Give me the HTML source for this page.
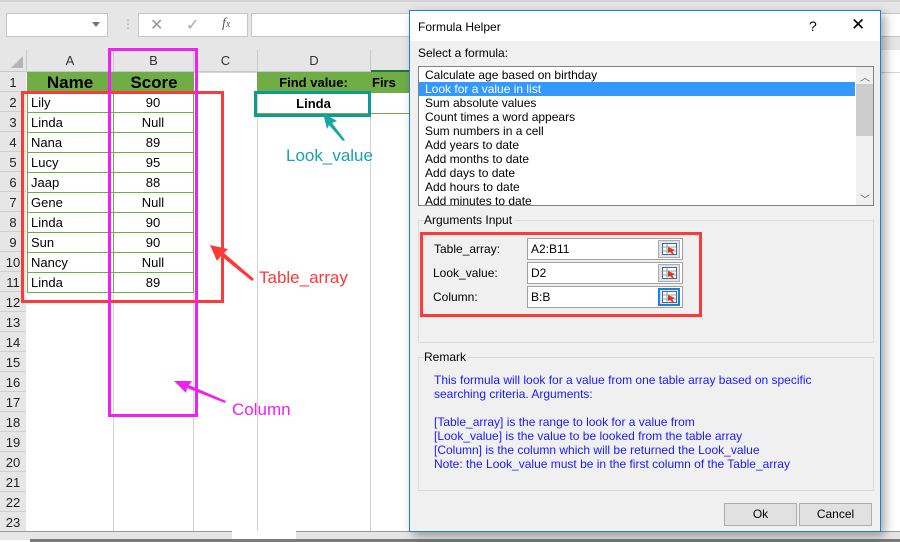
<!DOCTYPE html>
<html><head><meta charset="utf-8"><style>
*{margin:0;padding:0;box-sizing:border-box}
body{width:900px;height:542px;overflow:hidden;position:relative;background:#fff;font-family:"Liberation Sans",Arial,sans-serif;font-size:13px;color:#000}
.a{position:absolute}
.top{left:0;top:0;width:900px;height:50px;background:#e6e6e6;border-top:2px solid #d4d4d4}
.box{background:#fff;border:1px solid #c6c6c6}
.grid{left:26px;top:72px;width:874px;height:460px;background:
repeating-linear-gradient(to bottom,transparent 0,transparent 20px,#d4d4d4 20px,#d4d4d4 21px);background-size:100% 20px}
.vl{width:1px;background:#d4d4d4;top:50px;height:481px}
.rh{left:0;width:26px;text-align:center;font-size:13px;color:#222;background:#e6e6e6;height:20px;line-height:21px;border-bottom:1px solid #cfcfcf}
.ch{top:50px;height:22px;line-height:22px;text-align:center;background:#e6e6e6;border-right:1px solid #c8c8c8;border-bottom:1px solid #c8c8c8;color:#333}
.cell{height:20px;line-height:22px;font-size:13px}
.g{background:#70ad47;font-weight:bold;font-size:17px;text-align:center}
.dlg{left:409px;top:10px;width:472px;height:522px;background:#f0f0f0;border:1px solid #1e7fd6;box-shadow:4px 4px 10px rgba(0,0,0,.35)}
.li{left:6px;height:14px;line-height:14px;font-size:12px}
.lbl{font-size:12px}
.inp{background:#fff;border:1px solid #a0a0a0;height:22px;font-size:12px;line-height:20px;padding-left:3px}
.btn{position:absolute;right:2px;top:1px;width:22px;height:18px;background:#e1e1e1;border:1px solid #adadad}
.btn svg{position:absolute;left:3px;top:2px}
.rm{color:#1a1aff;font-size:12px;line-height:14px}
.bt{background:#e1e1e1;border:1px solid #adadad;height:23px;text-align:center;line-height:21px;font-size:12px}
</style></head><body>
<div class="a top"></div>
<div class="a box" style="left:6px;top:13px;width:102px;height:24px"></div>
<div class="a" style="left:92px;top:22px;border-left:4px solid transparent;border-right:4px solid transparent;border-top:5px solid #777"></div>
<div class="a" style="left:122px;top:17px;color:#aaa;font-size:12px">⋮</div>
<div class="a box" style="left:138px;top:13px;width:110px;height:24px"></div>
<div class="a" style="left:150px;top:15px;color:#999;font-size:16px">✕</div>
<div class="a" style="left:186px;top:15px;color:#aaa;font-size:16px">✓</div>
<div class="a" style="left:222px;top:16px;color:#555;font-style:italic;font-family:'Liberation Serif',serif;font-size:14px">f<span style="font-size:10px">x</span></div>
<div class="a box" style="left:251px;top:13px;width:660px;height:24px"></div>

<div class="a grid"></div>
<div class="a" style="left:26px;top:72px;width:874px;height:1px;background:#d4d4d4"></div>
<div class="a vl" style="left:113px"></div>
<div class="a vl" style="left:193px"></div>
<div class="a vl" style="left:257px"></div>
<div class="a vl" style="left:370px"></div>
<div class="a ch" style="left:0;width:27px"></div>
<div class="a" style="left:11px;top:56px;border-left:12px solid transparent;border-bottom:12px solid #b5b5b5"></div>
<div class="a ch" style="left:27px;width:87px">A</div>
<div class="a ch" style="left:114px;width:80px">B</div>
<div class="a ch" style="left:194px;width:64px">C</div>
<div class="a ch" style="left:258px;width:113px">D</div>
<div class="a ch" style="left:371px;width:60px;border-bottom:2px solid #217346"></div>
<div id="rows"></div>
<script>
var h='';for(var i=1;i<=23;i++){h+='<div class="a rh" style="top:'+(72+(i-1)*20)+'px">'+i+'</div>';}
var n=['Lily','Linda','Nana','Lucy','Jaap','Gene','Linda','Sun','Nancy','Linda'],s=['90','Null','89','95','88','Null','90','90','Null','89'];
for(var j=0;j<10;j++){var t=92+j*20;h+='<div class="a cell" style="left:27px;top:'+t+'px;width:87px;height:21px;padding-left:3px;border:1px solid #70ad47;border-top:none">'+n[j]+'</div><div class="a cell" style="left:113px;top:'+t+'px;width:81px;height:21px;text-align:center;border:1px solid #70ad47;border-top:none;border-left:none">'+s[j]+'</div>';}
document.getElementById('rows').innerHTML=h;
</script>
<div class="a cell g" style="left:27px;top:72px;width:167px;height:21px"><span style="position:absolute;left:0;width:86px;text-align:center;top:0">Name</span><span style="position:absolute;left:87px;width:80px;text-align:center;top:0">Score</span></div>
<div class="a cell g" style="left:257px;top:72px;width:152px;height:21px;font-size:13px;line-height:22px"><span style="position:absolute;left:0;width:113px">Find value:</span><span style="position:absolute;left:115px">Firs</span></div>
<div class="a" style="left:257px;top:93px;width:152px;height:21px;border-bottom:1px solid #70ad47"></div>
<div class="a cell" style="left:257px;top:93px;width:113px;text-align:center;font-weight:bold">Linda</div>
<div class="a" style="left:254px;top:91px;width:117px;height:26px;border:3px solid #0f9a96"></div>
<div class="a" style="left:286px;top:146px;color:#16a5a5;font-size:17px">Look_value</div>
<svg class="a" style="left:315px;top:110px" width="40" height="40"><polygon points="8,3 22,11 17,13 30,30 28,31 14,15 12,19" fill="#16a5a5"/></svg>
<div class="a" style="left:21px;top:91px;width:203px;height:212px;border:3px solid #fb3a3a"></div>
<div class="a" style="left:108px;top:48px;width:90px;height:369px;border:3px solid #f020f0"></div>
<svg class="a" style="left:200px;top:235px" width="60" height="50"><polygon points="10,10 28,14 24,18 54,44 52,46 21,21 17,26" fill="#fb3a3a"/></svg>
<div class="a" style="left:259px;top:268px;color:#fb3a3a;font-size:17px">Table_array</div>
<svg class="a" style="left:170px;top:375px" width="60" height="40"><polygon points="4,6 22,6 19,10 56,26 55,28 17,13 16,18" fill="#f020f0"/></svg>
<div class="a" style="left:232px;top:400px;color:#f020f0;font-size:17px">Column</div>
<div class="a" style="left:0;top:531px;width:900px;height:9px;background:#e6e6e6;border-top:1px solid #999"></div>
<div class="a" style="left:232px;top:531px;width:64px;height:9px;background:#fff"></div>
<div class="a" style="left:30px;top:539px;width:870px;height:3px;background:#7a7a7a"></div>

<div class="a dlg">
<div class="a" style="left:0;top:0;width:470px;height:30px;background:#fff"></div>
<div class="a" style="left:8px;top:9px;font-size:12px">Formula Helper</div>
<div class="a" style="left:399px;top:7px;font-size:14px">?</div>
<div class="a" style="left:441px;top:4px;font-size:17px">✕</div>
<div class="a" style="left:8px;top:35px;font-size:12px">Select a formula:</div>
<div class="a" style="left:8px;top:55px;width:456px;height:140px;background:#fff;border:1px solid #828282;overflow:hidden">
<div class="a" style="left:0;top:15px;width:436px;height:14px;background:#3399ff"></div>
<div class="a li" style="top:1px">Calculate age based on birthday</div>
<div class="a li" style="top:15px;color:#fff">Look for a value in list</div>
<div class="a li" style="top:29px">Sum absolute values</div>
<div class="a li" style="top:43px">Count times a word appears</div>
<div class="a li" style="top:57px">Sum numbers in a cell</div>
<div class="a li" style="top:71px">Add years to date</div>
<div class="a li" style="top:85px">Add months to date</div>
<div class="a li" style="top:99px">Add days to date</div>
<div class="a li" style="top:113px">Add hours to date</div>
<div class="a li" style="top:127px">Add minutes to date</div>
<div class="a" style="left:437px;top:0;width:17px;height:138px;background:#f0f0f0"></div>
<div class="a" style="left:437px;top:17px;width:17px;height:52px;background:#cdcdcd"></div>
<div class="a" style="left:441px;top:2px;font-size:10px;color:#555">︿</div>
<div class="a" style="left:441px;top:124px;font-size:10px;color:#555">﹀</div>
</div>
<div class="a" style="left:8px;top:209px;width:456px;height:123px;border:1px solid #dcdcdc"></div>
<div class="a" style="left:14px;top:202px;font-size:12px;background:#f0f0f0;padding-right:2px">Arguments Input</div>
<div class="a" style="left:10px;top:221px;width:282px;height:85px;border:3px solid #fb3a3a"></div>
<div class="a lbl" style="left:24px;top:231px">Table_array:</div>
<div class="a lbl" style="left:23px;top:255px">Look_value:</div>
<div class="a lbl" style="left:23px;top:279px">Column:</div>
<div class="a inp" style="left:117px;top:227px;width:156px">A2:B11<div class="btn"><svg width="15" height="12"><rect x="0.5" y="0.5" width="14" height="11" fill="#fff" stroke="#4a6d9c"/><path d="M1 4h13M1 8h13M5 1v10" stroke="#8aa" /><polygon points="6,4 13,7 10,8 12,11 10,11 8,9 6,10" fill="#e03020"/></svg></div></div>
<div class="a inp" style="left:117px;top:251px;width:156px">D2<div class="btn"><svg width="15" height="12"><rect x="0.5" y="0.5" width="14" height="11" fill="#fff" stroke="#4a6d9c"/><path d="M1 4h13M1 8h13M5 1v10" stroke="#8aa" /><polygon points="6,4 13,7 10,8 12,11 10,11 8,9 6,10" fill="#e03020"/></svg></div></div>
<div class="a inp" style="left:117px;top:275px;width:156px">B:B<div class="btn" style="border:2px solid #1e7fd6"><svg width="15" height="12" style="left:2px;top:1px"><rect x="0.5" y="0.5" width="14" height="11" fill="#fff" stroke="#4a6d9c"/><path d="M1 4h13M1 8h13M5 1v10" stroke="#8aa" /><polygon points="6,4 13,7 10,8 12,11 10,11 8,9 6,10" fill="#e03020"/></svg></div></div>
<div class="a" style="left:8px;top:346px;width:456px;height:134px;border:1px solid #dcdcdc"></div>
<div class="a" style="left:14px;top:339px;font-size:12px;background:#f0f0f0;padding-right:2px">Remark</div>
<div class="a rm" style="left:24px;top:362px">This formula will look for a value from one table array based on specific<br>searching criteria. Arguments:<br><br>[Table_array] is the range to look for a value from<br>[Look_value] is the value to be looked from the table array<br>[Column] is the column which will be returned the Look_value<br>Note: the Look_value must be in the first column of the Table_array</div>
<div class="a bt" style="left:314px;top:492px;width:73px">Ok</div>
<div class="a bt" style="left:389px;top:492px;width:73px">Cancel</div>
</div>
</body></html>
